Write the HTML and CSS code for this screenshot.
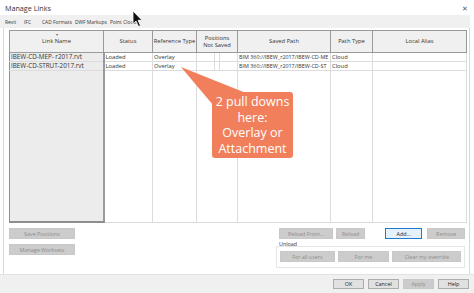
FILE: index.html
```html
<!DOCTYPE html>
<html lang="en">
<head>
    <meta charset="UTF-8">
    <title>Manage Links</title>
    <link rel="stylesheet" href="styles.css">
</head>
<body>
    <div class="dialog">
        <div class="titlebar">
            <span class="title">Manage Links</span>
            <span class="close">&#x2715;</span>
        </div>

        <div class="tabs">
            <span class="tab t-revit">Revit</span>
            <span class="tab t-ifc">IFC</span>
            <span class="tab t-cad">CAD Formats</span>
            <span class="tab t-dwf">DWF Markups</span>
            <span class="tab t-pc">Point Clouds</span>
        </div>

        <div class="panel">
            <table class="links">
                <colgroup>
                    <col class="c-name"><col class="c-status"><col class="c-type"><col class="c-pos">
                    <col class="c-path"><col class="c-ptype"><col class="c-alias">
                </colgroup>
                <thead>
                    <tr>
                        <th class="name-head"><span class="sort">&#x25BE;</span>Link Name</th>
                        <th>Status</th>
                        <th>Reference Type</th>
                        <th>Positions<br>Not Saved</th>
                        <th>Saved Path</th>
                        <th>Path Type</th>
                        <th>Local Alias</th>
                    </tr>
                </thead>
                <tbody>
                    <tr class="row">
                        <td class="name">IBEW-CD-MEP- r2017.rvt</td>
                        <td>Loaded</td>
                        <td>Overlay</td>
                        <td class="pos"><span class="check"></span></td>
                        <td class="path">BIM 360://IBEW_r2017/IBEW-CD-ME</td>
                        <td>Cloud</td>
                        <td></td>
                    </tr>
                    <tr class="row">
                        <td class="name">IBEW-CD-STRUT-2017.rvt</td>
                        <td>Loaded</td>
                        <td>Overlay</td>
                        <td class="pos"><span class="check"></span></td>
                        <td class="path">BIM 360://IBEW_r2017/IBEW-CD-ST</td>
                        <td>Cloud</td>
                        <td></td>
                    </tr>
                    <tr class="filler">
                        <td class="name"></td>
                        <td></td><td></td><td></td>
                        <td></td><td></td><td></td>
                    </tr>
                </tbody>
            </table>

            <div class="actions">
                <div class="left-actions">
                    <button class="btn off wide">Save Positions</button>
                    <button class="btn off wide">Manage Worksets</button>
                </div>
                <div class="right-actions">
                    <div class="btn-row">
                        <button class="btn off b-reload-from">Reload From...</button>
                        <button class="btn off b-reload">Reload</button>
                        <button class="btn focus b-add">Add...</button>
                        <button class="btn off b-remove">Remove</button>
                    </div>
                    <div class="unload-label">Unload</div>
                    <div class="unload">
                        <button class="btn off b-all">For all users</button>
                        <button class="btn off b-me">For me</button>
                        <button class="btn off b-clear">Clear my override</button>
                    </div>
                </div>
            </div>
        </div>

        <div class="footer">
            <button class="btn std">OK</button>
            <button class="btn std">Cancel</button>
            <button class="btn off">Apply</button>
            <button class="btn std">Help</button>
        </div>
    </div>

    <!-- annotation laid over the screenshot -->
    <svg class="arrow" width="474" height="293" viewBox="0 0 474 293">
        <polygon points="181,67 246,93 213,105" fill="#f17f5c"/>
    </svg>
    <div class="callout">2 pull downs<br>here:<br>Overlay or<br>Attachment</div>

    <svg class="cursor" width="12" height="18" viewBox="0 0 12 18">
        <path d="M1 1 L1 14 L4 11 L6.5 16.5 L8.5 15.6 L6 10.3 L10 10.3 Z" fill="#111" stroke="#fff" stroke-width="0.8"/>
    </svg>
</body>
</html>
```

FILE: styles.css
```css
body {
    margin: 0;
    background: #ffffff;
    font-family: "Open Sans", "Noto Sans", Arial, sans-serif;
    color: #222;
}
.dialog {
    width: 474px;
    height: 293px;
    display: flex;
    flex-direction: column;
    overflow: hidden;
}
.titlebar {
    height: 15px;
    display: flex;
    justify-content: space-between;
    align-items: center;
    padding: 0 6px 0 5px;
    font-size: 7.2px;
    color: #333;
}
.close {
    font-size: 7px;
    color: #555;
    margin-top: 2px;
}
.tabs {
    height: 13px;
    background: #f0f0f0;
    display: flex;
    align-items: center;
    padding-left: 5px;
    font-size: 4.9px;
    color: #333;
    margin-right: 4px;
}
.tab {
    white-space: nowrap;
}
.t-revit { width: 19px; }
.t-ifc { width: 18px; }
.t-cad { width: 33px; }
.t-dwf { width: 35px; }
.panel {
    flex: 1;
    border-left: 1px solid #d9d9d9;
    border-right: 1px solid #d9d9d9;
    margin: 0 4px 0 3px;
    padding: 2px 4px 0 5px;
}
table.links {
    border-collapse: collapse;
    table-layout: fixed;
    width: 457px;
    font-size: 5.8px;
}
.c-name { width: 94px; }
.c-status { width: 49px; }
.c-type { width: 44px; }
.c-pos { width: 41px; }
.c-path { width: 93px; }
.c-ptype { width: 42px; }
.c-alias { width: 94px; }

.links th {
    height: 21px;
    background: #f0f0f0;
    border: 1px solid #9a9a9a;
    font-weight: normal;
    color: #333;
    text-align: center;
    line-height: 7px;
    padding: 0;
}
.name-head {
    position: relative;
}
.sort {
    position: absolute;
    top: 0;
    left: 0;
    right: 0;
    font-size: 4px;
    color: #666;
}
.links td {
    border: 1px solid #dcdcdc;
    padding: 0 1px;
    white-space: nowrap;
    overflow: hidden;
    color: #333;
}
.links tr.row td {
    height: 8px;
    line-height: 8px;
}
.links tr.row td.name {
    font-size: 6.3px;
}
.links tr.row td.path {
    font-size: 5.4px;
}
.links tr.filler td {
    height: 150px;
}
.links td.name {
    background: #ececec;
    border-left: 1px solid #8e8e8e;
    border-right: 2px solid #9a9a9a;
}
.links tr.filler td.name {
    border-bottom: 2px solid #8e8e8e;
}
.links td.pos {
    position: relative;
}
.check {
    position: absolute;
    left: 17px;
    top: 0;
    bottom: 0;
    width: 4px;
    border-left: 1px solid #dcdcdc;
    border-right: 1px solid #dcdcdc;
}

.actions {
    display: flex;
    justify-content: space-between;
    margin-top: 5px;
}
.left-actions {
    display: flex;
    flex-direction: column;
    gap: 5px;
}
.btn {
    font-family: inherit;
    font-size: 5.4px;
    height: 11px;
    padding: 0;
    border: 1px solid #c8c8c8;
    background: #cccccc;
    color: #8c8c8c;
}
.btn.wide {
    width: 66px;
}
.right-actions {
    width: 189px;
    display: flex;
    flex-direction: column;
}
.btn-row {
    display: flex;
    gap: 3px;
    padding-left: 3px;
}
.b-reload-from { width: 55px; }
.b-reload { width: 29px; }
.b-add { width: 38px; margin-left: 17px; }
.b-remove { width: 38px; margin-left: 2px; }
.btn.focus {
    background: #e5f1fb;
    border-color: #1b7bd0;
    color: #222;
}
.unload-label {
    font-size: 5.4px;
    color: #333;
    margin: 2px 0 0 3px;
    line-height: 7px;
}
.unload {
    display: flex;
    gap: 3px;
    margin-top: -2px;
    padding: 4px 3px 5px 3px;
    border: 1px solid #e6e6e6;
}
.b-all { width: 55px; }
.b-me { width: 52px; }
.b-clear { width: 69px; }

.footer {
    height: 18px;
    background: #f0f0f0;
    border-top: 1px solid #e2e2e2;
    display: flex;
    justify-content: flex-end;
    align-items: center;
    gap: 4px;
    padding-right: 5px;
}
.footer .btn {
    width: 31px;
    height: 10px;
}
.btn.std {
    background: #e1e1e1;
    border-color: #adadad;
    color: #222;
}

.arrow {
    position: absolute;
    left: 0;
    top: 0;
    pointer-events: none;
}
.callout {
    position: absolute;
    left: 212px;
    top: 92px;
    width: 81px;
    height: 66px;
    background: #f17f5c;
    border-radius: 3px;
    color: #ffffff;
    font-family: "Open Sans", Arial, sans-serif;
    font-size: 12.5px;
    line-height: 15.5px;
    text-align: center;
    display: flex;
    align-items: center;
    justify-content: center;
}
.cursor {
    position: absolute;
    left: 132px;
    top: 10px;
}
```
